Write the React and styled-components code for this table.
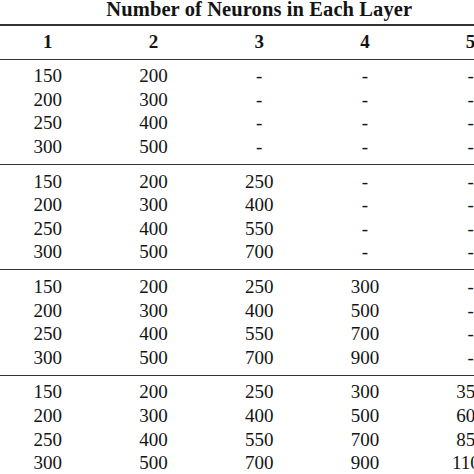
import React from 'react';
import styled, { createGlobalStyle } from 'styled-components';

const GlobalStyle = createGlobalStyle`
  html, body {
    margin: 0;
    padding: 0;
    background: #fff;
    overflow: hidden;
  }
  body {
    width: 474px;
    height: 474px;
  }
`;

const COL = 105.7;

const Table = styled.div`
  margin-left: -5px;
  width: ${COL * 6}px;
  font-family: 'Liberation Serif', 'Times New Roman', serif;
  color: #141414;
`;

const Title = styled.div`
  width: ${COL * 5}px;
  height: 24px;
  line-height: 18px;
  text-align: center;
  font-size: 20.5px;
  font-weight: bold;
  letter-spacing: 0.1px;
  border-bottom: 2px solid #333;
  box-sizing: content-box;
`;

const Row = styled.div`
  display: grid;
  grid-template-columns: repeat(6, ${COL}px);
  align-items: center;
  height: ${p => p.$h || 23.6}px;
  font-size: 19px;
  font-weight: ${p => (p.$bold ? 'bold' : 'normal')};
`;

const Cell = styled.div`
  text-align: center;
`;

const HeaderBlock = styled.div`
  border-bottom: 1.5px solid #333;
`;

const Group = styled.div`
  padding: 5px 0 5px;
  border-bottom: ${p => (p.$last ? 'none' : '1.5px solid #333')};
`;

const groups = [
  [
    ['150', '200', '-', '-', '-'],
    ['200', '300', '-', '-', '-'],
    ['250', '400', '-', '-', '-'],
    ['300', '500', '-', '-', '-'],
  ],
  [
    ['150', '200', '250', '-', '-'],
    ['200', '300', '400', '-', '-'],
    ['250', '400', '550', '-', '-'],
    ['300', '500', '700', '-', '-'],
  ],
  [
    ['150', '200', '250', '300', '-'],
    ['200', '300', '400', '500', '-'],
    ['250', '400', '550', '700', '-'],
    ['300', '500', '700', '900', '-'],
  ],
  [
    ['150', '200', '250', '300', '350'],
    ['200', '300', '400', '500', '600'],
    ['250', '400', '550', '700', '850'],
    ['300', '500', '700', '900', '1100'],
  ],
];

export default function App() {
  return (
    <>
      <GlobalStyle />
      <Table>
        <Title>Number of Neurons in Each Layer</Title>
        <HeaderBlock>
          <Row $bold $h={32.5}>
            {['1', '2', '3', '4', '5'].map(h => (
              <Cell key={h}>{h}</Cell>
            ))}
          </Row>
        </HeaderBlock>
        {groups.map((g, gi) => (
          <Group key={gi} $last={gi === groups.length - 1}>
            {g.map((r, ri) => (
              <Row key={ri}>
                {r.map((v, ci) => (
                  <Cell key={ci}>{v}</Cell>
                ))}
              </Row>
            ))}
          </Group>
        ))}
      </Table>
    </>
  );
}
